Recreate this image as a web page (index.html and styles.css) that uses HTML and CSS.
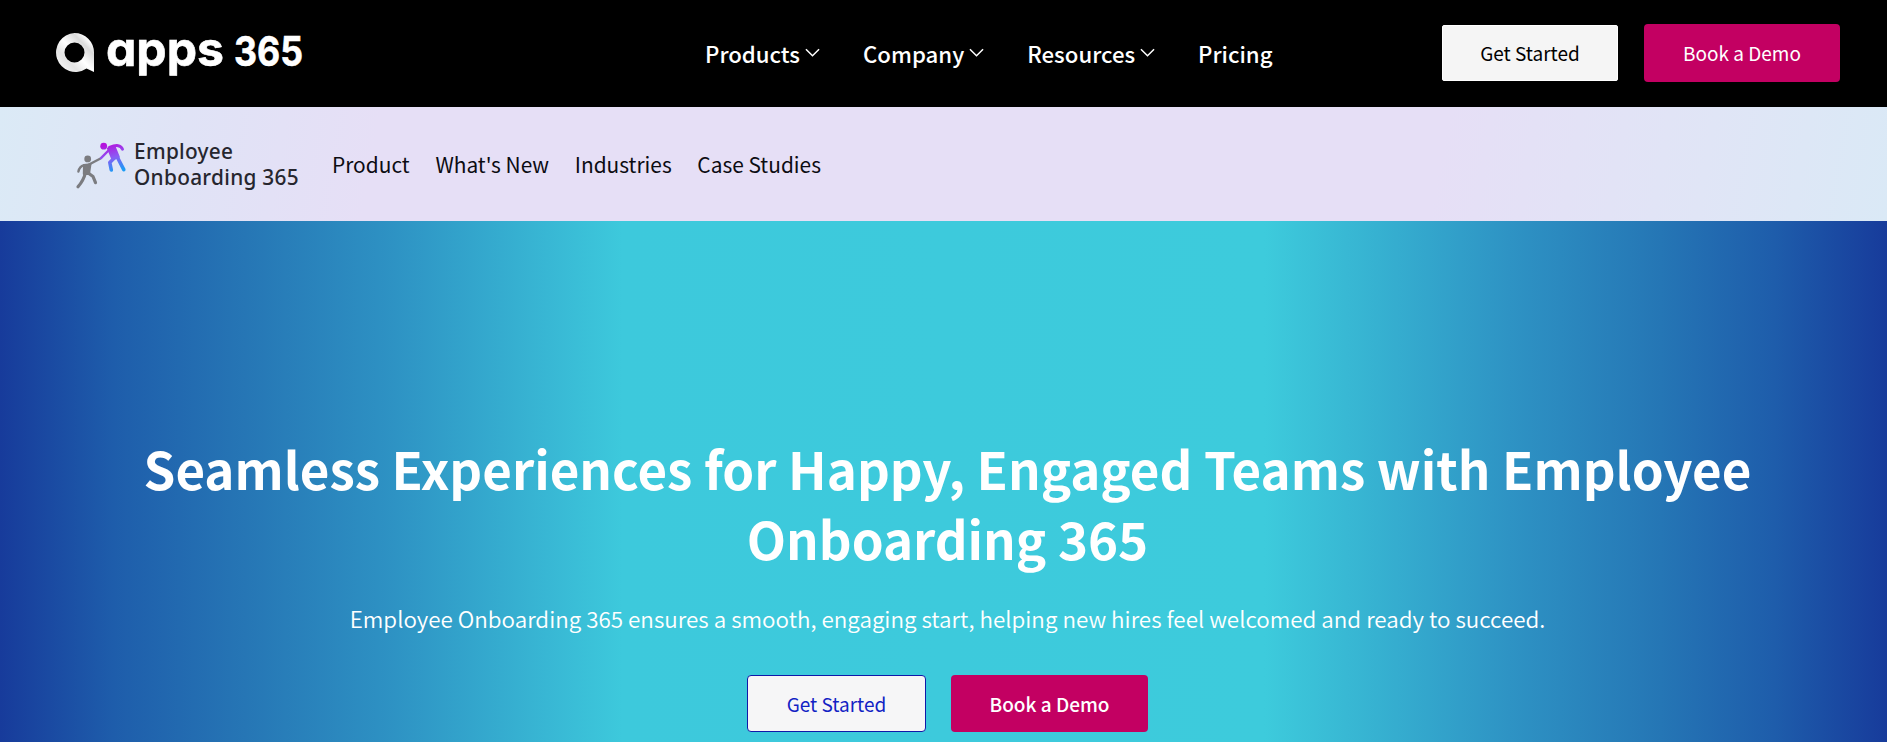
FILE: index.html
```html
<!DOCTYPE html>
<html lang="en">
<head>
    <meta charset="UTF-8">
    <meta name="viewport" content="width=device-width, initial-scale=1.0">
    <title>Employee Onboarding 365</title>
    <link rel="stylesheet" href="styles.css">
</head>
<body>
    <header class="header">
        <a class="logo" href="#">
            <svg width="260" height="80" viewBox="0 -15 260 80">
                <defs>
                    <linearGradient id="ring" x1="0" y1="1" x2="1" y2="0">
                        <stop offset="0" stop-color="#fff"/>
                        <stop offset="0.3" stop-color="#e4e4e4"/>
                        <stop offset="0.5" stop-color="#fff"/>
                        <stop offset="0.72" stop-color="#dadada"/>
                        <stop offset="0.85" stop-color="#fff"/>
                    </linearGradient>
                </defs>
                <path fill="url(#ring)" fill-rule="evenodd" d="M19.5 4A19.5 19.5 0 0 1 39 23.5V43L31.5 39.6A19.5 19.5 0 1 1 19.5 4ZM19.5 13.5A10 10 0 1 0 19.5 33.5A10 10 0 1 0 19.5 13.5Z"/>
                <text class="logo-word" x="51" y="36.5" textLength="118" lengthAdjust="spacingAndGlyphs">apps</text>
                <text class="logo-num" x="179" y="36.5" textLength="69" lengthAdjust="spacingAndGlyphs">365</text>
            </svg>
        </a>
        <nav class="nav">
            <a href="#">Products <svg class="chevron" viewBox="0 0 16 10"><path d="M1 1l7 7 7-7"/></svg></a>
            <a href="#">Company <svg class="chevron" viewBox="0 0 16 10"><path d="M1 1l7 7 7-7"/></svg></a>
            <a href="#">Resources <svg class="chevron" viewBox="0 0 16 10"><path d="M1 1l7 7 7-7"/></svg></a>
            <a href="#">Pricing</a>
        </nav>
        <div class="header-buttons">
            <a class="btn btn-light" href="#">Get Started</a>
            <a class="btn btn-pink" href="#">Book a Demo</a>
        </div>
    </header>

    <div class="subheader">
        <a class="product" href="#">
            <svg class="product-icon" width="52" height="50" viewBox="0 0 52 50">
                <defs>
                    <linearGradient id="climber" gradientUnits="userSpaceOnUse" x1="34" y1="4" x2="42" y2="31">
                        <stop offset="0" stop-color="#b413dc"/>
                        <stop offset="0.5" stop-color="#8a5cf5"/>
                        <stop offset="1" stop-color="#1b9cf5"/>
                    </linearGradient>
                </defs>
                <g fill="none" stroke="#7b7c80" stroke-linecap="round" stroke-linejoin="round">
                    <circle cx="12.7" cy="18.9" r="3.4" fill="#7b7c80" stroke="none"/>
                    <path stroke-width="2.4" d="M9 25.2Q4.5 26.5 3.4 31.5M14 24.5L25 18.8"/>
                    <path fill="#7b7c80" stroke-width="2" d="M9 25L15.5 24.2L14 34L8.8 34Z"/>
                    <path stroke-width="3.2" d="M10.2 33.5Q8.8 40 3 46.8"/>
                    <path stroke-width="3.2" d="M12.5 32.5L18 36.5L20.5 42.7"/>
                </g>
                <g fill="none" stroke="url(#climber)" stroke-linecap="round" stroke-linejoin="round">
                    <circle cx="28.7" cy="6.2" r="3.4" fill="url(#climber)" stroke="none"/>
                    <path stroke-width="2.4" d="M34 10L26 18.2"/>
                    <path stroke-width="3" d="M34.5 7.5Q45 3 47.5 9.2"/>
                    <path fill="url(#climber)" stroke-width="2" d="M33 8.5L39.5 6.5L43.8 17L37.5 19.5Z"/>
                    <path stroke-width="3.6" d="M38.8 18.5L34.8 22.5L36.3 30M42.5 17.5L48.8 29.6"/>
                </g>
            </svg>
            <span class="product-name">Employee<br>Onboarding 365</span>
        </a>
        <nav class="subnav">
            <a href="#">Product</a>
            <a href="#">What's New</a>
            <a href="#">Industries</a>
            <a href="#">Case Studies</a>
        </nav>
    </div>

    <section class="hero">
        <h1>Seamless Experiences for Happy, Engaged Teams with Employee Onboarding 365</h1>
        <p>Employee Onboarding 365 ensures a smooth, engaging start, helping new hires feel welcomed and ready to succeed.</p>
        <div class="hero-buttons">
            <a class="btn btn-outline" href="#">Get Started</a>
            <a class="btn btn-pink btn-strong" href="#">Book a Demo</a>
        </div>
    </section>
</body>
</html>
```
FILE: styles.css
```css
* {
    box-sizing: border-box;
}

body {
    margin: 0;
    height: 100vh;
    display: flex;
    flex-direction: column;
    overflow: hidden;
    font-family: "Noto Sans CJK SC", "Noto Sans", sans-serif;
}

a {
    color: inherit;
    text-decoration: none;
}

.header {
    height: 107px;
    flex: none;
    display: grid;
    grid-template-columns: 650px 1fr auto;
    align-items: center;
    padding: 0 47px 2px 55px;
    background: #000;
    color: #fff;
}

.logo svg {
    display: block;
    margin-top: 2px;
}

.logo-word,
.logo-num {
    fill: #fff;
    stroke: #fff;
    stroke-width: 0.6;
    font-family: Inter, sans-serif;
    font-weight: 700;
    font-feature-settings: "cv11";
}

.logo-word {
    font-size: 48px;
}

.logo-num {
    font-size: 41px;
}

.nav {
    display: flex;
    gap: 43.5px;
    font-size: 22.2px;
    font-weight: 500;
    line-height: 34px;
}

.nav a {
    display: flex;
    align-items: center;
    gap: 4.5px;
}

.chevron {
    width: 15px;
    height: 10px;
    fill: none;
    stroke: #fff;
    stroke-width: 1.6;
}

.header-buttons,
.hero-buttons {
    display: flex;
    align-items: center;
}

.header-buttons {
    gap: 26px;
}

.btn {
    display: flex;
    align-items: center;
    justify-content: center;
    width: 196px;
    height: 58px;
    border-radius: 4px;
    font-size: 19px;
}

.btn-light {
    width: 176px;
    height: 56px;
    border: 1px solid #fff;
    border-radius: 2px;
    background: #f5f5f5;
    color: #000;
}

.btn-pink {
    background: #c30062;
    color: #fff;
}

.btn-outline {
    width: 179px;
    height: 57px;
    border: 1px solid #1019a8;
    background: #f6f6f7;
    color: #1222c4;
}

.btn-strong {
    width: 197px;
    height: 57px;
    font-weight: 500;
}

.subheader {
    height: 114px;
    flex: none;
    display: flex;
    align-items: center;
    padding-left: 75px;
    background: linear-gradient(100deg, #dbeaf6 0%, #e0e3f6 10%, #e6dff6 20%, #e6dff6 76%, #e0e5f6 90%, #dae9f6 100%);
}

.product {
    display: flex;
    width: 257px;
    gap: 7px;
}

.product-icon {
    margin-top: 2px;
}

.product-name {
    color: #26262e;
    font-family: "Noto Sans", sans-serif;
    font-size: 20.8px;
    font-weight: 500;
    letter-spacing: 0.3px;
    line-height: 26.5px;
    white-space: nowrap;
}

.subnav {
    display: flex;
    gap: 25.7px;
    color: #0c0c12;
    font-size: 20.9px;
}

.hero {
    flex: 1;
    padding: 213px 60px 0 68px;
    background: linear-gradient(90deg, #173b9b 0%, #1e5dab 6%, #2676b5 13%, #2e93c4 21%, #3dc9dc 33%, #3dcbdc 67%, #2e93c4 80%, #2576b5 88%, #1e5dab 94%, #173b9b 100%);
    color: #fff;
    text-align: center;
}

.hero h1 {
    margin: 0;
    font-size: 51.05px;
    font-weight: 700;
    line-height: 69.5px;
}

.hero p {
    margin: 28px 0 0;
    font-size: 22.4px;
    font-weight: 350;
    line-height: 34px;
}

.hero-buttons {
    justify-content: center;
    gap: 25px;
    margin-top: 40px;
}
```
